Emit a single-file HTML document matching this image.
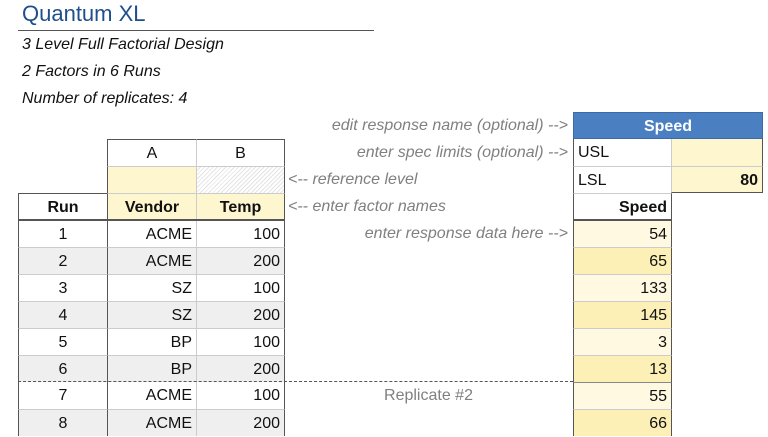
<!DOCTYPE html>
<html><head><meta charset="utf-8"><style>
body{margin:0;width:768px;height:424px;overflow:hidden;background:#fff;font-family:"Liberation Sans",sans-serif;position:relative;color:#111}
div{position:absolute;box-sizing:border-box}
.c{height:27px;line-height:27px;font-size:16px;padding:0 4px;white-space:nowrap}
.r{text-align:right}.m{text-align:center}.b{font-weight:bold}
.n{font-style:italic;color:#808080;font-size:16px;text-align:right;white-space:nowrap;line-height:27px;height:27px}
.it{font-style:italic;font-size:16px;left:22px;white-space:nowrap}
.g{background:#efefef}.y{background:#fdf6cf}.y2{background:#fcf0b6}.yl{background:#fef9e0}
</style></head><body>
<div style="left:22px;top:1px;font-size:22px;color:#1f4e8c">Quantum XL</div>
<div style="left:18px;top:30px;width:356px;height:1px;background:#555"></div>
<div class="it" style="top:36px">3 Level Full Factorial Design</div>
<div class="it" style="top:63px">2 Factors in 6 Runs</div>
<div class="it" style="top:90px">Number of replicates: 4</div>

<div class="n" style="right:200px;top:112px">edit response name (optional) --&gt;</div>
<div class="n" style="right:200px;top:139px">enter spec limits (optional) --&gt;</div>
<div class="n" style="left:288px;top:166px;text-align:left">&lt;-- reference level</div>
<div class="n" style="left:288px;top:193px;text-align:left">&lt;-- enter factor names</div>
<div class="n" style="right:200px;top:220px">enter response data here --&gt;</div>
<div class="c m" style="left:284px;width:289px;top:382px;color:#808080">Replicate #2</div>

<div class="c m" style="left:107px;top:139px;width:89px;border-top:1px solid #555;border-left:1px solid #555">A</div>
<div class="c m" style="left:196px;top:139px;width:89px;border-top:1px solid #555;border-left:1px solid #ccc;border-right:1px solid #555">B</div>
<div class="c y" style="left:107px;top:166px;width:89px;border-top:1px solid #ccc;border-left:1px solid #555"></div>
<div class="c" style="left:196px;top:166px;width:89px;border-top:1px solid #ccc;border-left:1px solid #ccc;border-right:1px solid #555;background:repeating-linear-gradient(135deg,#fff 0 2px,#e4e4e4 2px 3px)"></div>
<div class="c m b" style="left:18px;top:193px;width:89px;border:1px solid #555;border-right:none;border-bottom:none">Run</div>
<div class="c m b y" style="left:107px;top:193px;width:89px;border-top:1px solid #ccc;border-left:1px solid #555">Vendor</div>
<div class="c m b y" style="left:196px;top:193px;width:89px;border-top:1px solid #ccc;border-left:1px solid #ccc;border-right:1px solid #555">Temp</div>

<div class="c m b" style="left:573px;top:112px;width:190px;background:#4a7fc1;color:#fff;border:1px solid #3a6aa8">Speed</div>
<div class="c" style="left:573px;top:139px;width:98px;border-left:1px solid #555">USL</div>
<div class="c y" style="left:671px;top:139px;width:92px;border-left:1px solid #ccc;border-right:1px solid #555"></div>
<div class="c" style="left:573px;top:166px;width:98px;border-left:1px solid #555;border-top:1px solid #ccc">LSL</div>
<div class="c r b y" style="left:671px;top:166px;width:92px;border:1px solid #555;border-left:1px solid #ccc;border-top:1px solid #ccc">80</div>
<div class="c r b" style="left:573px;top:193px;width:99px;border-left:1px solid #555;border-right:1px solid #555;border-top:1px solid #ccc">Speed</div>

<div style="left:18px;top:219px;width:267px;height:2px;background:#555"></div>
<div style="left:573px;top:219px;width:99px;height:2px;background:#555"></div>

<div class="c m" style="left:18px;top:221px;width:89px;border-left:1px solid #555">1</div><div class="c r" style="left:107px;top:221px;width:89px;border-left:1px solid #555">ACME</div><div class="c r" style="left:196px;top:221px;width:89px;border-left:1px solid #ccc;border-right:1px solid #555">100</div><div class="c r yl" style="left:573px;top:221px;width:99px;border-left:1px solid #555;border-right:1px solid #555">54</div>

<div class="c m g" style="left:18px;top:247px;width:89px;border-left:1px solid #555;border-top:1px solid #ccc">2</div><div class="c r g" style="left:107px;top:247px;width:89px;border-left:1px solid #555;border-top:1px solid #ccc">ACME</div><div class="c r g" style="left:196px;top:247px;width:89px;border-left:1px solid #ccc;border-right:1px solid #555;border-top:1px solid #ccc">200</div><div class="c r y2" style="left:573px;top:247px;width:99px;border-left:1px solid #555;border-right:1px solid #555;border-top:1px solid #ccc">65</div>

<div class="c m" style="left:18px;top:274px;width:89px;border-left:1px solid #555;border-top:1px solid #ccc">3</div><div class="c r" style="left:107px;top:274px;width:89px;border-left:1px solid #555;border-top:1px solid #ccc">SZ</div><div class="c r" style="left:196px;top:274px;width:89px;border-left:1px solid #ccc;border-right:1px solid #555;border-top:1px solid #ccc">100</div><div class="c r yl" style="left:573px;top:274px;width:99px;border-left:1px solid #555;border-right:1px solid #555;border-top:1px solid #ccc">133</div>

<div class="c m g" style="left:18px;top:301px;width:89px;border-left:1px solid #555;border-top:1px solid #ccc">4</div><div class="c r g" style="left:107px;top:301px;width:89px;border-left:1px solid #555;border-top:1px solid #ccc">SZ</div><div class="c r g" style="left:196px;top:301px;width:89px;border-left:1px solid #ccc;border-right:1px solid #555;border-top:1px solid #ccc">200</div><div class="c r y2" style="left:573px;top:301px;width:99px;border-left:1px solid #555;border-right:1px solid #555;border-top:1px solid #ccc">145</div>

<div class="c m" style="left:18px;top:328px;width:89px;border-left:1px solid #555;border-top:1px solid #ccc">5</div><div class="c r" style="left:107px;top:328px;width:89px;border-left:1px solid #555;border-top:1px solid #ccc">BP</div><div class="c r" style="left:196px;top:328px;width:89px;border-left:1px solid #ccc;border-right:1px solid #555;border-top:1px solid #ccc">100</div><div class="c r yl" style="left:573px;top:328px;width:99px;border-left:1px solid #555;border-right:1px solid #555;border-top:1px solid #ccc">3</div>

<div class="c m g" style="left:18px;top:355px;width:89px;border-left:1px solid #555;border-top:1px solid #ccc">6</div><div class="c r g" style="left:107px;top:355px;width:89px;border-left:1px solid #555;border-top:1px solid #ccc">BP</div><div class="c r g" style="left:196px;top:355px;width:89px;border-left:1px solid #ccc;border-right:1px solid #555;border-top:1px solid #ccc">200</div><div class="c r y2" style="left:573px;top:355px;width:99px;border-left:1px solid #555;border-right:1px solid #555;border-top:1px solid #ccc">13</div>

<div class="c m" style="left:18px;top:382px;width:89px;border-left:1px solid #555">7</div><div class="c r" style="left:107px;top:382px;width:89px;border-left:1px solid #555">ACME</div><div class="c r" style="left:196px;top:382px;width:89px;border-left:1px solid #ccc;border-right:1px solid #555">100</div><div class="c r yl" style="left:573px;top:382px;width:99px;border-left:1px solid #555;border-right:1px solid #555;border-top:1px solid #888">55</div>

<div class="c m g" style="left:18px;top:409px;width:89px;border-left:1px solid #555;border-top:1px solid #ccc">8</div><div class="c r g" style="left:107px;top:409px;width:89px;border-left:1px solid #555;border-top:1px solid #ccc">ACME</div><div class="c r g" style="left:196px;top:409px;width:89px;border-left:1px solid #ccc;border-right:1px solid #555;border-top:1px solid #ccc">200</div><div class="c r y2" style="left:573px;top:409px;width:99px;border-left:1px solid #555;border-right:1px solid #555;border-top:1px solid #ccc">66</div>

<div style="left:18px;top:381px;width:555px;height:0;border-top:1px dashed #555"></div>
</body></html>
